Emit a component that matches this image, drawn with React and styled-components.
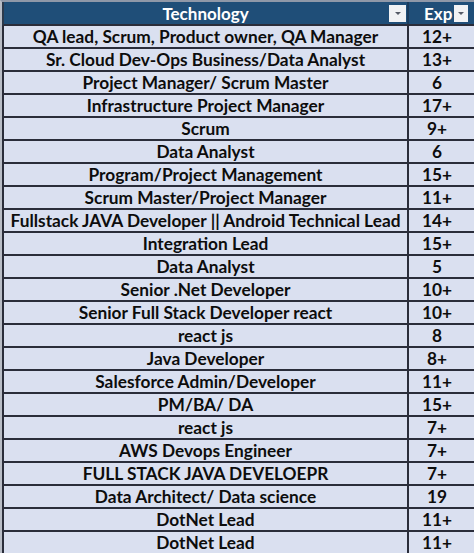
import styled, { createGlobalStyle } from 'styled-components'

const rows = [
  ['QA lead, Scrum, Product owner, QA Manager', '12+'],
  ['Sr. Cloud Dev-Ops Business/Data Analyst', '13+'],
  ['Project Manager/ Scrum Master', '6'],
  ['Infrastructure Project Manager', '17+'],
  ['Scrum', '9+'],
  ['Data Analyst', '6'],
  ['Program/Project Management', '15+'],
  ['Scrum Master/Project Manager', '11+'],
  ['Fullstack JAVA Developer || Android Technical Lead', '14+'],
  ['Integration Lead', '15+'],
  ['Data Analyst', '5'],
  ['Senior .Net Developer', '10+'],
  ['Senior Full Stack Developer react', '10+'],
  ['react js', '8'],
  ['Java Developer', '8+'],
  ['Salesforce Admin/Developer', '11+'],
  ['PM/BA/ DA', '15+'],
  ['react js', '7+'],
  ['AWS Devops Engineer', '7+'],
  ['FULL STACK JAVA DEVELOEPR', '7+'],
  ['Data Architect/ Data science', '19'],
  ['DotNet Lead', '11+'],
  ['DotNet Lead', '11+'],
]

const GlobalStyle = createGlobalStyle`
  html, body {
    margin: 0;
    padding: 0;
    overflow: hidden;
    background: #dae0f0;
  }
  body {
    font-family: Lato, "Liberation Sans", sans-serif;
  }
`

export default function App() {
  return (
    <>
      <GlobalStyle />
      <Sheet>
        <HeaderRow>
          <HeadCell>
            Technology
            <FilterButton aria-label="Filter Technology" />
          </HeadCell>
          <HeadCell exp>
            Exp
            <FilterButton exp aria-label="Filter Exp" />
          </HeadCell>
        </HeaderRow>
        {rows.map(([tech, exp], i) => (
          <Row key={i}>
            <Cell>{tech}</Cell>
            <Cell exp>{exp}</Cell>
          </Row>
        ))}
      </Sheet>
    </>
  )
}

const Sheet = styled.div`
  width: 474px;
  height: 553px;
  overflow: hidden;
  border-top: 2px solid #8f98a8;
  border-left: 2px solid #b9bdc6;
  box-sizing: border-box;
`

const HeaderRow = styled.div`
  display: grid;
  grid-template-columns: 405px 1fr;
  height: 22px;
  background: #1f4e78;
  border-left: 2px solid #2c3a4c;
  border-bottom: 2px solid #2a2d3a;
`

const HeadCell = styled.div`
  position: relative;
  display: flex;
  align-items: center;
  justify-content: ${p => (p.exp ? 'flex-start' : 'center')};
  padding-left: ${p => (p.exp ? '15px' : '0')};
  color: #ffffff;
  font-size: 17px;
  font-weight: 700;
  border-right: ${p => (p.exp ? 'none' : '2px solid #1a3b5c')};
`

const FilterButton = styled.button`
  position: absolute;
  top: 3px;
  right: ${p => (p.exp ? '6px' : '1px')};
  width: ${p => (p.exp ? '14px' : '17px')};
  height: 17px;
  padding: 0;
  border: none;
  background: #f1f2f4;
  cursor: pointer;

  &::after {
    content: '';
    position: absolute;
    left: ${p => (p.exp ? '4px' : '6px')};
    top: 7px;
    border-left: 3px solid transparent;
    border-right: 3px solid transparent;
    border-top: 3px solid #555a66;
  }
`

const Row = styled.div`
  display: grid;
  grid-template-columns: 405px 1fr;
  height: 21px;
  background: #dae0f0;
  border-left: 2px solid #2a2d3a;
  border-bottom: 2px solid #2a2d3a;
`

const Cell = styled.div`
  display: flex;
  align-items: center;
  justify-content: center;
  padding-right: ${p => (p.exp ? '9px' : '0')};
  color: #0d0d0d;
  font-size: 17.3px;
  font-weight: 700;
  white-space: nowrap;
  border-right: ${p => (p.exp ? 'none' : '2px solid #2a2d3a')};
  box-sizing: border-box;
`
